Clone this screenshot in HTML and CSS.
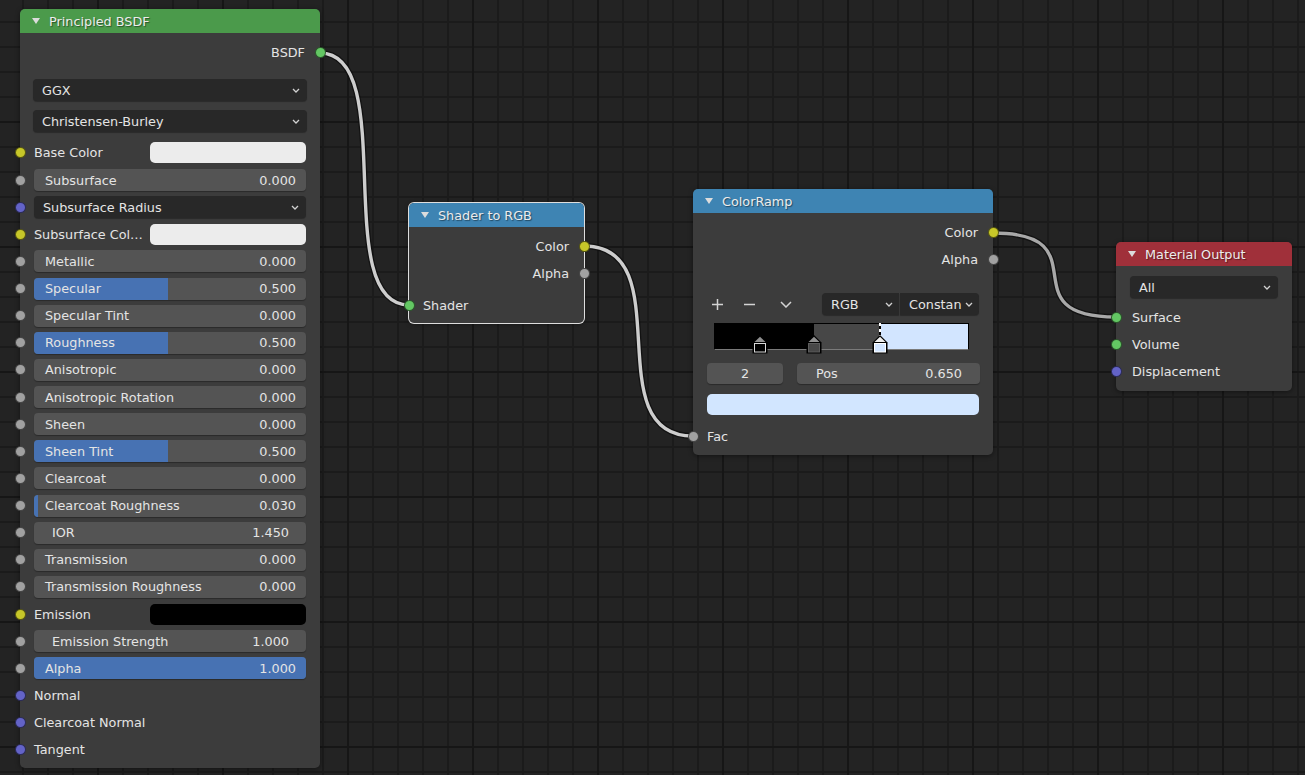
FILE: index.html
```html
<!DOCTYPE html>
<html lang="en">
<head>
  <meta charset="UTF-8">
  <title>Shader Editor</title>
  <link rel="stylesheet" href="styles.css">
</head>
<body>
  <div class="editor">
    <!-- NOODLES BETWEEN THE NODES -->
    <svg class="links" width="1305" height="775" viewBox="0 0 1305 775">
      <path class="wire-back" d="M320 53 C400.1 53 328.9 305 409 305"/>
      <path class="wire wire-hot" d="M320 53 C400.1 53 328.9 305 409 305"/>
      <path class="wire-back" d="M584 246 C682.1 246 594.9 436 693 436"/>
      <path class="wire wire-hot" d="M584 246 C682.1 246 594.9 436 693 436"/>
      <path class="wire-back" d="M993 233 C1103.7 233 1005.3 317 1116 317"/>
      <path class="wire" d="M993 233 C1103.7 233 1005.3 317 1116 317"/>
    </svg>

    <!-- PRINCIPLED BSDF -->
    <div class="node node-principled">
      <div class="node-header header-shader">
        <svg class="tri" width="8" height="6" viewBox="0 0 8 6"><path d="M0 0h8L4 6z"/></svg>
        <span>Principled BSDF</span>
      </div>
      <div class="node-body body-principled">
        <div class="row row-out"><span>BSDF</span><span class="socket socket-right s-shader"></span></div>
        <div class="select-row select-ggx">
          <div class="select"><span>GGX</span><svg class="chev" width="8" height="5" viewBox="0 0 8 5"><path d="M1 1l3 3 3-3"/></svg></div>
        </div>
        <div class="select-row select-sss">
          <div class="select"><span>Christensen-Burley</span><svg class="chev" width="8" height="5" viewBox="0 0 8 5"><path d="M1 1l3 3 3-3"/></svg></div>
        </div>
        <div class="inputs">
          <div class="row row-in"><span class="socket s-color"></span><span class="in-label">Base Color</span><span class="swatch swatch-white"></span></div>
          <div class="row row-in"><span class="socket s-float"></span><div class="slider"><span class="s-label">Subsurface</span><span class="s-value">0.000</span></div></div>
          <div class="row row-in"><span class="socket s-vector"></span><div class="select select-wide"><span>Subsurface Radius</span><svg class="chev" width="8" height="5" viewBox="0 0 8 5"><path d="M1 1l3 3 3-3"/></svg></div></div>
          <div class="row row-in"><span class="socket s-color"></span><span class="in-label">Subsurface Col…</span><span class="swatch swatch-white"></span></div>
          <div class="row row-in"><span class="socket s-float"></span><div class="slider"><span class="s-label">Metallic</span><span class="s-value">0.000</span></div></div>
          <div class="row row-in"><span class="socket s-float"></span><div class="slider"><span class="fill" style="width:49.3%"></span><span class="s-label">Specular</span><span class="s-value">0.500</span></div></div>
          <div class="row row-in"><span class="socket s-float"></span><div class="slider"><span class="s-label">Specular Tint</span><span class="s-value">0.000</span></div></div>
          <div class="row row-in"><span class="socket s-float"></span><div class="slider"><span class="fill" style="width:49.3%"></span><span class="s-label">Roughness</span><span class="s-value">0.500</span></div></div>
          <div class="row row-in"><span class="socket s-float"></span><div class="slider"><span class="s-label">Anisotropic</span><span class="s-value">0.000</span></div></div>
          <div class="row row-in"><span class="socket s-float"></span><div class="slider"><span class="s-label">Anisotropic Rotation</span><span class="s-value">0.000</span></div></div>
          <div class="row row-in"><span class="socket s-float"></span><div class="slider"><span class="s-label">Sheen</span><span class="s-value">0.000</span></div></div>
          <div class="row row-in"><span class="socket s-float"></span><div class="slider"><span class="fill" style="width:49.3%"></span><span class="s-label">Sheen Tint</span><span class="s-value">0.500</span></div></div>
          <div class="row row-in"><span class="socket s-float"></span><div class="slider"><span class="s-label">Clearcoat</span><span class="s-value">0.000</span></div></div>
          <div class="row row-in"><span class="socket s-float"></span><div class="slider"><span class="fill" style="width:1.3%"></span><span class="s-label">Clearcoat Roughness</span><span class="s-value">0.030</span></div></div>
          <div class="row row-in"><span class="socket s-float"></span><div class="slider slider-num"><span class="s-label">IOR</span><span class="s-value">1.450</span></div></div>
          <div class="row row-in"><span class="socket s-float"></span><div class="slider"><span class="s-label">Transmission</span><span class="s-value">0.000</span></div></div>
          <div class="row row-in"><span class="socket s-float"></span><div class="slider"><span class="s-label">Transmission Roughness</span><span class="s-value">0.000</span></div></div>
          <div class="row row-in"><span class="socket s-color"></span><span class="in-label">Emission</span><span class="swatch swatch-black"></span></div>
          <div class="row row-in"><span class="socket s-float"></span><div class="slider slider-num"><span class="s-label">Emission Strength</span><span class="s-value">1.000</span></div></div>
          <div class="row row-in"><span class="socket s-float"></span><div class="slider"><span class="fill" style="width:100%"></span><span class="s-label">Alpha</span><span class="s-value">1.000</span></div></div>
          <div class="row row-in"><span class="socket s-vector"></span><span class="in-label">Normal</span></div>
          <div class="row row-in"><span class="socket s-vector"></span><span class="in-label">Clearcoat Normal</span></div>
          <div class="row row-in"><span class="socket s-vector"></span><span class="in-label">Tangent</span></div>
        </div>
      </div>
    </div>

    <!-- SHADER TO RGB (selected) -->
    <div class="node node-torgb is-selected">
      <div class="node-header header-convert">
        <svg class="tri" width="8" height="6" viewBox="0 0 8 6"><path d="M0 0h8L4 6z"/></svg>
        <span>Shader to RGB</span>
      </div>
      <div class="node-body body-torgb">
        <div class="row row-out"><span>Color</span><span class="socket socket-right s-color"></span></div>
        <div class="row row-out"><span>Alpha</span><span class="socket socket-right s-float"></span></div>
        <div class="row row-in row-shader"><span class="socket s-shader"></span><span class="in-label">Shader</span></div>
      </div>
    </div>

    <!-- COLORRAMP -->
    <div class="node node-ramp">
      <div class="node-header header-convert">
        <svg class="tri" width="8" height="6" viewBox="0 0 8 6"><path d="M0 0h8L4 6z"/></svg>
        <span>ColorRamp</span>
      </div>
      <div class="node-body body-ramp">
        <div class="row row-out"><span>Color</span><span class="socket socket-right s-color"></span></div>
        <div class="row row-out"><span>Alpha</span><span class="socket socket-right s-float"></span></div>
        <div class="ramp-tools">
          <span class="tool"><svg width="11" height="11" viewBox="0 0 11 11"><path d="M5.5 0v11M0 5.5h11"/></svg></span>
          <span class="tool tool-minus"><svg width="11" height="11" viewBox="0 0 11 11"><path d="M0 5.5h11"/></svg></span>
          <span class="tool tool-menu"><svg width="12" height="7" viewBox="0 0 12 7"><path d="M1 1l5 5 5-5"/></svg></span>
          <div class="select-pair">
            <div class="select select-left"><span>RGB</span><svg class="chev" width="8" height="5" viewBox="0 0 8 5"><path d="M1 1l3 3 3-3"/></svg></div>
            <div class="select select-right"><span>Constan</span><svg class="chev" width="8" height="5" viewBox="0 0 8 5"><path d="M1 1l3 3 3-3"/></svg></div>
          </div>
        </div>
        <div class="ramp">
          <div class="ramp-band"></div>
          <svg class="ramp-stops" width="255" height="31" viewBox="0 0 255 31">
            <path d="M166 0v14" stroke="#000" stroke-width="2"/>
            <path d="M166 0v14" stroke="#fff" stroke-width="2" stroke-dasharray="3 3"/>
            <g transform="translate(46,0)">
              <path d="M-7.5 19.5 L0 12 L7.5 19.5 V30.5 H-7.5 Z" fill="#000"/>
              <path d="M-5.5 19 L0 13.8 L5.5 19 Z" fill="#8f8f8f"/>
              <rect x="-5.5" y="20.5" width="11" height="8.5" fill="#000" stroke="#d8d8d8" stroke-width="1"/>
            </g>
            <g transform="translate(100,0)">
              <path d="M-7.5 19.5 L0 12 L7.5 19.5 V30.5 H-7.5 Z" fill="#000"/>
              <path d="M-5.5 19 L0 13.8 L5.5 19 Z" fill="#8f8f8f"/>
              <rect x="-5.5" y="20.5" width="11" height="8.5" fill="#474747" stroke="#5c5c5c" stroke-width="1"/>
            </g>
            <g transform="translate(166,0)">
              <path d="M-7.5 19.5 L0 12 L7.5 19.5 V30.5 H-7.5 Z" fill="#000"/>
              <path d="M-5.5 19 L0 13.8 L5.5 19 Z" fill="#f0f0f0"/>
              <rect x="-5.5" y="20.5" width="11" height="8.5" fill="#d2e5ff" stroke="#ffffff" stroke-width="1"/>
            </g>
          </svg>
        </div>
        <div class="ramp-fields">
          <div class="field field-index">2</div>
          <div class="field field-pos"><span>Pos</span><span>0.650</span></div>
        </div>
        <div class="ramp-swatch"></div>
        <div class="row row-in row-fac"><span class="socket s-float"></span><span class="in-label">Fac</span></div>
      </div>
    </div>

    <!-- MATERIAL OUTPUT -->
    <div class="node node-output">
      <div class="node-header header-output">
        <svg class="tri" width="8" height="6" viewBox="0 0 8 6"><path d="M0 0h8L4 6z"/></svg>
        <span>Material Output</span>
      </div>
      <div class="node-body body-output">
        <div class="select-row">
          <div class="select"><span>All</span><svg class="chev" width="8" height="5" viewBox="0 0 8 5"><path d="M1 1l3 3 3-3"/></svg></div>
        </div>
        <div class="outputs">
          <div class="row row-in"><span class="socket s-shader"></span><span class="in-label">Surface</span></div>
          <div class="row row-in"><span class="socket s-shader"></span><span class="in-label">Volume</span></div>
          <div class="row row-in"><span class="socket s-vector"></span><span class="in-label">Displacement</span></div>
        </div>
      </div>
    </div>
  </div>
</body>
</html>
```

FILE: styles.css
```css
body {
  margin: 0;
  background-color: #232323;
  font-family: 'DejaVu Sans', sans-serif;
  font-size: 12.8px;
  color: #e4e4e4;
}

/* grid of the node editor */
.editor {
  position: relative;
  width: 1305px;
  height: 775px;
  overflow: hidden;
  background-color: #232323;
  background-image:
    linear-gradient(to right, #161616 2px, transparent 2px),
    linear-gradient(to bottom, #161616 2px, transparent 2px),
    linear-gradient(to right, #1b1b1b 2px, transparent 2px),
    linear-gradient(to bottom, #1b1b1b 2px, transparent 2px);
  background-size: 125px 125px, 125px 125px, 25px 25px, 25px 25px;
  background-position: 97px 0, 0 121px, 22px 0, 0 21px;
}

.links {
  position: absolute;
  left: 0;
  top: 0;
  fill: none;
}

.wire-back {
  stroke: rgba(12, 12, 12, 0.7);
  stroke-width: 6;
}

.wire {
  stroke: #a8a8a8;
  stroke-width: 3.4;
}

.wire-hot {
  stroke: #cdcdcd;
}

/* nodes */
.node {
  position: absolute;
  background-color: #3c3c3c;
  border-radius: 5px;
  box-shadow: 0 1px 5px rgba(0, 0, 0, 0.45);
}

.node.is-selected {
  box-shadow: 0 0 0 1px #dedede, 0 1px 5px rgba(0, 0, 0, 0.45);
}

.node-principled { left: 20px; top: 9px; width: 300px; }
.node-torgb { left: 409px; top: 203px; width: 175px; }
.node-ramp { left: 693px; top: 189px; width: 300px; }
.node-output { left: 1116px; top: 242px; width: 176px; }

.node-header {
  height: 24px;
  border-radius: 5px 5px 0 0;
  display: flex;
  align-items: center;
  padding-left: 12px;
  color: #ececec;
  text-shadow: 1px 1px 1px rgba(0, 0, 0, 0.45);
}

.node-header .tri {
  fill: #dcdcdc;
  margin-right: 9px;
}

.header-shader { background-color: #4b9a4b; }
.header-convert { background-color: #3e84b3; }
.header-output { background-color: #a0303a; }

.node-body {
  display: flex;
  flex-direction: column;
}

.body-principled { padding: 6px 0 4.4px; }
.body-torgb { padding: 6px 0 4.5px; }
.body-ramp { padding: 6px 0 5.5px; }
.body-output { padding: 10px 0 6.5px; }

/* socket rows */
.row {
  position: relative;
  display: flex;
  align-items: center;
}

.row-out {
  height: 27px;
  justify-content: flex-end;
  padding-right: 15px;
}

.row-in {
  height: 27px;
  padding: 0 14px;
}

.inputs .row-in {
  height: 27.14px;
}

.row-shader { margin-top: 4.5px; }
.row-fac { margin-top: 7.5px; }
.outputs { margin-top: 5.5px; }
.outputs .row-in { padding-left: 16px; }

.in-label {
  flex: 1;
  white-space: nowrap;
}

.socket {
  position: absolute;
  left: -5.5px;
  top: 50%;
  width: 11px;
  height: 11px;
  margin-top: -5.5px;
  box-sizing: border-box;
  border-radius: 50%;
  border: 1px solid rgba(0, 0, 0, 0.55);
}

.socket-right {
  left: auto;
  right: -5.5px;
}

.s-shader { background-color: #63c763; }
.s-color { background-color: #c7c729; }
.s-float { background-color: #a1a1a1; }
.s-vector { background-color: #6363c7; }

/* widgets */
.select-row {
  display: flex;
  padding: 0 13px;
}

.select-ggx { margin-top: 13px; }
.select-sss { margin-top: 9px; }
.inputs { margin-top: 7.4px; }
.body-output .select-row { padding: 0 14px; }

.select {
  flex: 1;
  height: 22px;
  box-sizing: border-box;
  display: flex;
  align-items: center;
  justify-content: space-between;
  padding: 0 7px 0 9px;
  background-color: #282828;
  border-radius: 4px;
  box-shadow: 0 1px 1px rgba(0, 0, 0, 0.3);
  white-space: nowrap;
}

.chev {
  fill: none;
  stroke: #d2d2d2;
  stroke-width: 1.3;
}

.swatch {
  width: 156px;
  height: 21px;
  border-radius: 5px;
}

.swatch-white { background-color: #ececec; }
.swatch-black { background-color: #000000; }

.slider {
  position: relative;
  flex: 1;
  height: 22px;
  box-sizing: border-box;
  display: flex;
  align-items: center;
  justify-content: space-between;
  padding: 0 10px 0 11px;
  background-color: #545454;
  border-radius: 4px;
  overflow: hidden;
  box-shadow: 0 1px 1px rgba(0, 0, 0, 0.3);
  white-space: nowrap;
}

.slider-num {
  padding: 0 17px 0 18px;
}

.slider .fill {
  position: absolute;
  left: 0;
  top: 0;
  bottom: 0;
  background-color: #4772b3;
}

.s-label,
.s-value {
  position: relative;
}

/* color ramp */
.ramp-tools {
  display: flex;
  align-items: center;
  height: 22px;
  margin-top: 20px;
  padding: 0 14px;
}

.tool {
  display: flex;
  align-items: center;
  justify-content: center;
  width: 22px;
  height: 22px;
}

.tool svg {
  fill: none;
  stroke: #d4d4d4;
  stroke-width: 1.5;
}

.tool-minus { margin-left: 10px; }
.tool-menu { margin-left: 15px; }

.select-pair {
  display: flex;
  margin-left: 25px;
  flex: 1;
}

.select-pair .select {
  flex: none;
  padding: 0 6px 0 9px;
}

.select-left {
  width: 77px;
  border-radius: 4px 0 0 4px;
}

.select-right {
  width: 79px;
  border-radius: 0 4px 4px 0;
  margin-left: 1px;
}

.ramp {
  position: relative;
  height: 27px;
  margin: 8px 24px 0 21px;
}

.ramp-band {
  height: 100%;
  box-sizing: border-box;
  border: 1px solid #000;
  border-bottom-color: #7a7a7a;
  background: linear-gradient(to right, #000 0 39.2%, #474747 39.2% 65%, #d2e5ff 65%);
}

.ramp-stops {
  position: absolute;
  left: 0;
  top: 0;
  overflow: visible;
}

.ramp-fields {
  display: flex;
  gap: 14px;
  margin-top: 13px;
  padding: 0 13px 0 14px;
}

.field {
  height: 21px;
  box-sizing: border-box;
  display: flex;
  align-items: center;
  background-color: #545454;
  border-radius: 4px;
  box-shadow: 0 1px 1px rgba(0, 0, 0, 0.3);
}

.field-index {
  width: 76px;
  justify-content: center;
}

.field-pos {
  flex: 1;
  justify-content: space-between;
  padding: 0 18px 0 19px;
}

.ramp-swatch {
  height: 21px;
  margin: 10px 14px 0;
  background-color: #d2e6ff;
  border-radius: 5px;
}
```
